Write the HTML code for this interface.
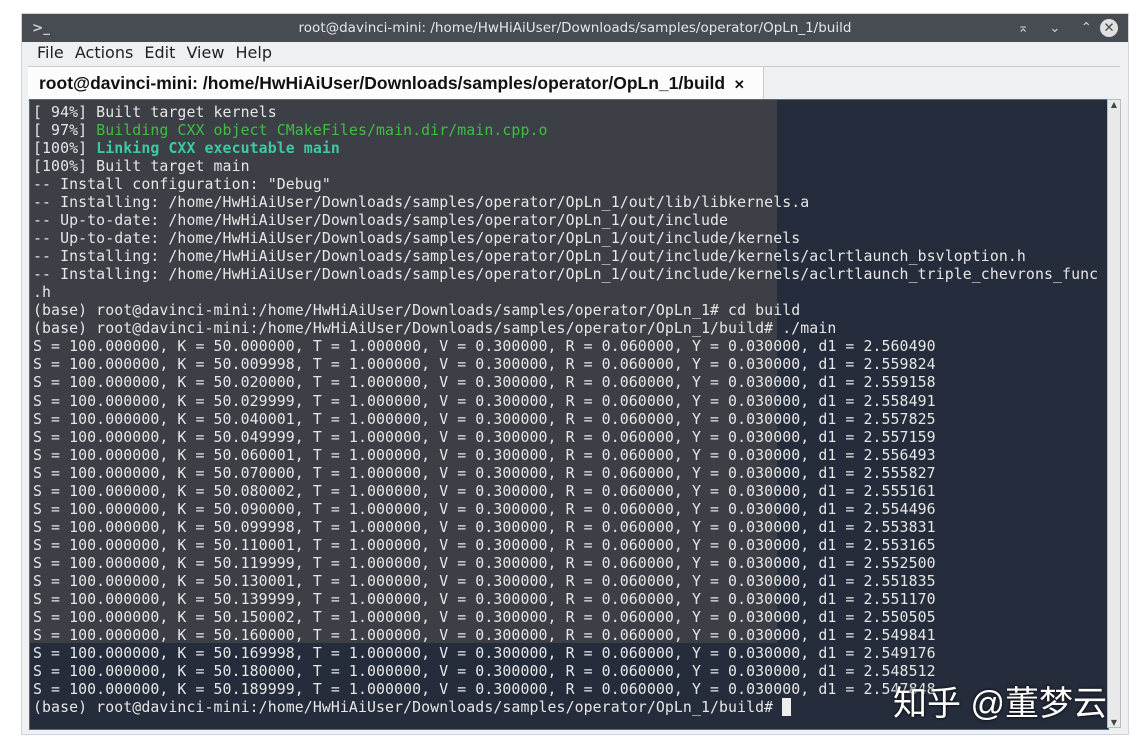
<!DOCTYPE html>
<html><head><meta charset="utf-8"><style>
body{margin:0;width:1137px;height:746px;background:#fff;position:relative;overflow:hidden;font-family:"DejaVu Sans","Liberation Sans",sans-serif}
.win{position:absolute;left:21px;top:13px;width:1106px;height:720px;background:#eff0f1;border:1px solid #d0d4d8}
.title{position:absolute;left:0;top:0;width:1106px;height:28px;background:#474c52;color:#e4e6e8;font-size:13.5px;line-height:28px;text-align:center;white-space:nowrap}
.menu{position:absolute;left:15px;top:29px;font-size:16px;color:#222;word-spacing:6px;white-space:nowrap}
.tabbar{position:absolute;left:6px;top:52px;width:1092px;height:33px;border-top:1px solid #c8ccd0;border-bottom:1px solid #aac6dc}
.tab{position:absolute;left:0;top:0;width:736px;height:32px;background:#fcfcfc;border-right:1px solid #c8ccd0;font-family:"Liberation Sans",sans-serif;font-weight:bold;font-size:17.5px;line-height:32px;padding-left:11px;color:#111;box-sizing:border-box;white-space:nowrap}
.term{position:absolute;left:7px;top:85px;width:1078px;height:629px;background:#252c3b;border:1px solid #4a6d95;overflow:hidden}
.grey{position:absolute;left:0;top:0;width:747px;height:543px;background:#3c3f45}
.sb{position:absolute;left:1085px;top:85px;width:14px;height:629px;background:#e8e9ea;border:1px solid #b8bcc0;box-sizing:border-box}
pre{position:absolute;left:3px;top:3px;margin:0;font-family:"DejaVu Sans Mono","Liberation Mono",monospace;font-size:14.85px;letter-spacing:0.09px;line-height:18.03px;color:#e6e6e6}
.g{color:#3fbf3f}.c{color:#3ec9a0;font-weight:bold}
.wm{position:absolute;left:893px;top:676px;font-family:"Liberation Sans","Noto Sans CJK SC",sans-serif;font-size:34px;color:#fff;text-shadow:0 0 3px #000}
.cur{background:#eee;color:#eee}
</style></head><body>
<div class="win">
<div class="title"><span style="position:absolute;left:10px;top:0;font-weight:bold;color:#ccc">&gt;_</span>root@davinci-mini: /home/HwHiAiUser/Downloads/samples/operator/OpLn_1/build
<span style="position:absolute;right:10px;top:0;letter-spacing:8px;color:#ccc">⌅ ⌄ ⌃<span style="display:inline-block;width:18px;height:18px;border-radius:9px;background:#e0e0e0;color:#474c52;line-height:18px;letter-spacing:0;vertical-align:middle">✕</span></span></div>
<div class="menu">File Actions Edit View Help</div>
<div class="tabbar"><div class="tab">root@davinci-mini: /home/HwHiAiUser/Downloads/samples/operator/OpLn_1/build <span style="font-size:13px;margin-left:4px">✕</span></div></div>
<div class="term"><div class="grey"></div>
<pre>[ 94%] Built target kernels
[ 97%] <span class="g">Building CXX object CMakeFiles/main.dir/main.cpp.o</span>
[100%] <span class="c">Linking CXX executable main</span>
[100%] Built target main
-- Install configuration: "Debug"
-- Installing: /home/HwHiAiUser/Downloads/samples/operator/OpLn_1/out/lib/libkernels.a
-- Up-to-date: /home/HwHiAiUser/Downloads/samples/operator/OpLn_1/out/include
-- Up-to-date: /home/HwHiAiUser/Downloads/samples/operator/OpLn_1/out/include/kernels
-- Installing: /home/HwHiAiUser/Downloads/samples/operator/OpLn_1/out/include/kernels/aclrtlaunch_bsvloption.h
-- Installing: /home/HwHiAiUser/Downloads/samples/operator/OpLn_1/out/include/kernels/aclrtlaunch_triple_chevrons_func
.h
(base) root@davinci-mini:/home/HwHiAiUser/Downloads/samples/operator/OpLn_1# cd build
(base) root@davinci-mini:/home/HwHiAiUser/Downloads/samples/operator/OpLn_1/build# ./main
S = 100.000000, K = 50.000000, T = 1.000000, V = 0.300000, R = 0.060000, Y = 0.030000, d1 = 2.560490
S = 100.000000, K = 50.009998, T = 1.000000, V = 0.300000, R = 0.060000, Y = 0.030000, d1 = 2.559824
S = 100.000000, K = 50.020000, T = 1.000000, V = 0.300000, R = 0.060000, Y = 0.030000, d1 = 2.559158
S = 100.000000, K = 50.029999, T = 1.000000, V = 0.300000, R = 0.060000, Y = 0.030000, d1 = 2.558491
S = 100.000000, K = 50.040001, T = 1.000000, V = 0.300000, R = 0.060000, Y = 0.030000, d1 = 2.557825
S = 100.000000, K = 50.049999, T = 1.000000, V = 0.300000, R = 0.060000, Y = 0.030000, d1 = 2.557159
S = 100.000000, K = 50.060001, T = 1.000000, V = 0.300000, R = 0.060000, Y = 0.030000, d1 = 2.556493
S = 100.000000, K = 50.070000, T = 1.000000, V = 0.300000, R = 0.060000, Y = 0.030000, d1 = 2.555827
S = 100.000000, K = 50.080002, T = 1.000000, V = 0.300000, R = 0.060000, Y = 0.030000, d1 = 2.555161
S = 100.000000, K = 50.090000, T = 1.000000, V = 0.300000, R = 0.060000, Y = 0.030000, d1 = 2.554496
S = 100.000000, K = 50.099998, T = 1.000000, V = 0.300000, R = 0.060000, Y = 0.030000, d1 = 2.553831
S = 100.000000, K = 50.110001, T = 1.000000, V = 0.300000, R = 0.060000, Y = 0.030000, d1 = 2.553165
S = 100.000000, K = 50.119999, T = 1.000000, V = 0.300000, R = 0.060000, Y = 0.030000, d1 = 2.552500
S = 100.000000, K = 50.130001, T = 1.000000, V = 0.300000, R = 0.060000, Y = 0.030000, d1 = 2.551835
S = 100.000000, K = 50.139999, T = 1.000000, V = 0.300000, R = 0.060000, Y = 0.030000, d1 = 2.551170
S = 100.000000, K = 50.150002, T = 1.000000, V = 0.300000, R = 0.060000, Y = 0.030000, d1 = 2.550505
S = 100.000000, K = 50.160000, T = 1.000000, V = 0.300000, R = 0.060000, Y = 0.030000, d1 = 2.549841
S = 100.000000, K = 50.169998, T = 1.000000, V = 0.300000, R = 0.060000, Y = 0.030000, d1 = 2.549176
S = 100.000000, K = 50.180000, T = 1.000000, V = 0.300000, R = 0.060000, Y = 0.030000, d1 = 2.548512
S = 100.000000, K = 50.189999, T = 1.000000, V = 0.300000, R = 0.060000, Y = 0.030000, d1 = 2.547848
(base) root@davinci-mini:/home/HwHiAiUser/Downloads/samples/operator/OpLn_1/build# <span class="cur">_</span></pre>
</div>
<div class="sb"><div style="font-size:8px;text-align:center;color:#444">▲</div><div style="position:absolute;bottom:0;width:12px;font-size:8px;text-align:center;color:#444">▼</div></div>
</div>
<div class="wm">知乎 @董梦云</div>
</body></html>
